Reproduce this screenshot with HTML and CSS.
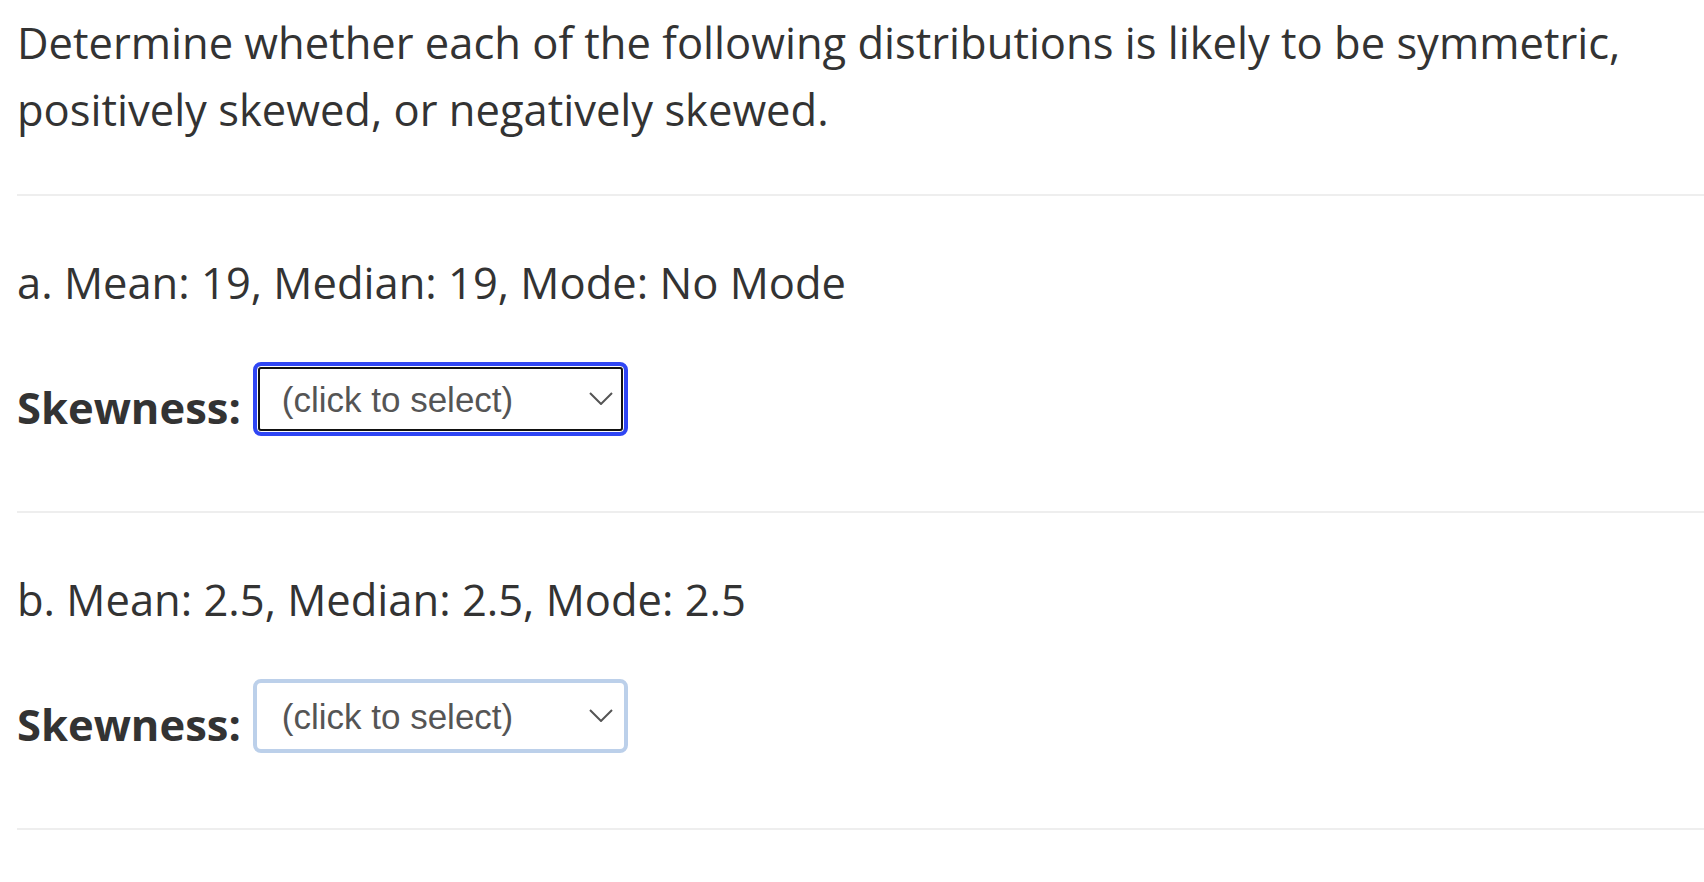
FILE: index.html
```
<!DOCTYPE html>
<html>
  <head>
    <meta name="viewport" content="width=device-width, initial-scale=1.0">
    <title>Skewness</title>
    <link rel="stylesheet" href="styles.css">
  </head>
  <body>
    <div class="question">
      <p class="prompt">Determine whether each of the following distributions is likely to be symmetric, positively skewed, or negatively skewed.</p>

      <div class="part">
        <p class="part-title">a. Mean: 19, Median: 19, Mode: No Mode</p>
        <div class="skew-row">
          <span class="skew-label">Skewness:</span>
          <div class="select-wrap">
            <select class="skew-select focused">
              <option>(click to select)</option>
              <option>symmetric</option>
              <option>positively skewed</option>
              <option>negatively skewed</option>
            </select>
            <svg class="chevron" width="24" height="13" viewBox="0 0 24 13"><path d="M1 1 L12 12 L23 1" fill="none" stroke="#555" stroke-width="2"/></svg>
          </div>
        </div>
      </div>

      <div class="part">
        <p class="part-title">b. Mean: 2.5, Median: 2.5, Mode: 2.5</p>
        <div class="skew-row">
          <span class="skew-label">Skewness:</span>
          <div class="select-wrap">
            <select class="skew-select">
              <option>(click to select)</option>
              <option>symmetric</option>
              <option>positively skewed</option>
              <option>negatively skewed</option>
            </select>
            <svg class="chevron" width="24" height="13" viewBox="0 0 24 13"><path d="M1 1 L12 12 L23 1" fill="none" stroke="#555" stroke-width="2"/></svg>
          </div>
        </div>
      </div>
    </div>
  </body>
</html>
```

FILE: styles.css
```
body {
  margin: 0;
  background-color: #fff;
  color: #333;
  font-family: "Open Sans", "Noto Sans", sans-serif;
  font-size: 43.5px;
  line-height: 67px;
}
.question {
  padding: 9px 0 0 17px;
}
.prompt {
  margin: 0;
  padding-bottom: 51px;
  border-bottom: 2px solid #eee;
}
.part {
  padding: 53px 0 70px;
  border-bottom: 2px solid #eee;
}
.part-title {
  margin: 0;
}
.skew-row {
  display: flex;
  align-items: flex-start;
  margin-top: 46px;
}
.skew-label {
  font-weight: bold;
  padding-top: 12px;
}
.select-wrap {
  position: relative;
  margin-left: 12px;
}
.skew-select {
  appearance: none;
  -webkit-appearance: none;
  display: block;
  box-sizing: border-box;
  width: 375px;
  height: 74px;
  margin: 0;
  padding: 0 0 0 25px;
  border: 4px solid #bcd0ea;
  border-radius: 8px;
  background-color: #fff;
  color: #555;
  font-family: "Liberation Sans", Arial, sans-serif;
  font-size: 35px;
  outline: none;
}
.skew-select.focused {
  border-color: #2f46f4;
  box-shadow: inset 0 0 0 1px #fff, inset 0 0 0 3px #111;
}
.chevron {
  position: absolute;
  right: 15px;
  top: 30px;
  pointer-events: none;
}
```
